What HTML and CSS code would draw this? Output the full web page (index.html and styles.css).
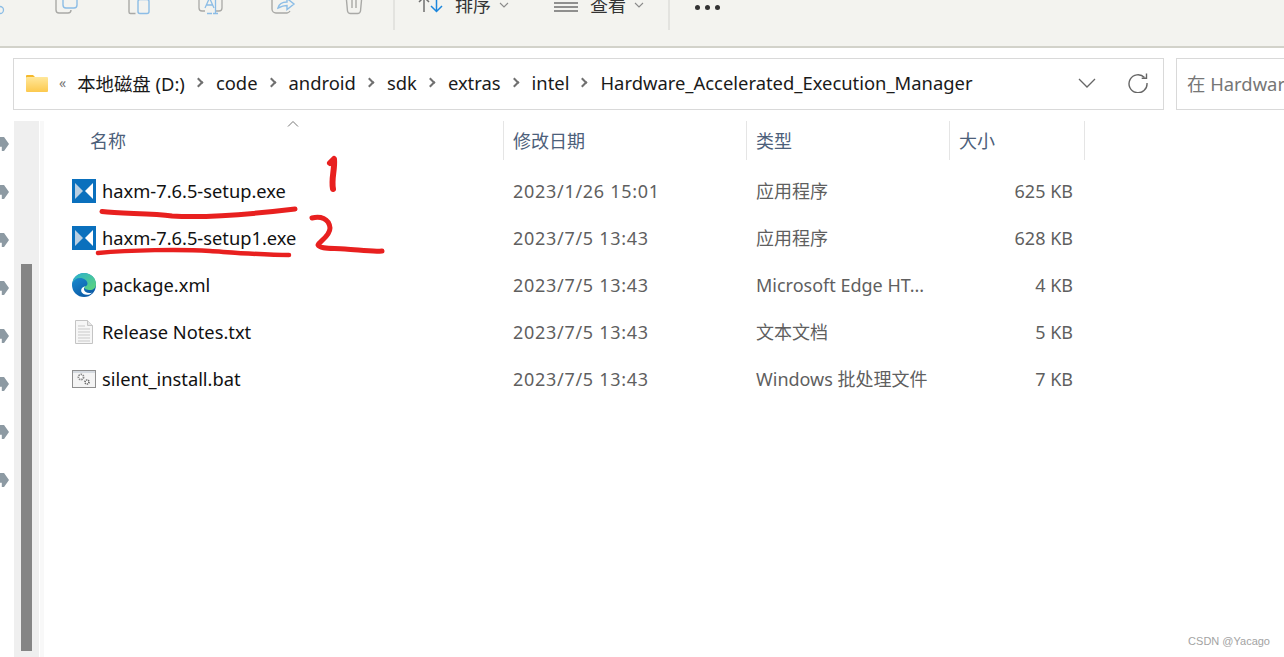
FILE: index.html
```html
<!DOCTYPE html>
<html lang="zh-CN">
<head>
    <meta charset="UTF-8">
    <meta name="viewport" content="width=device-width, initial-scale=1.0">
    <title>Hardware_Accelerated_Execution_Manager</title>
    <link rel="stylesheet" href="styles.css">
</head>
<body>
    <!-- Toolbar, cut off at the top of the shot -->
    <div class="toolbar">
        <svg class="tool tool-cut" width="5" height="20" viewBox="0 0 5 20"><circle cx="0" cy="13" r="3.5" fill="none" stroke="#8cbde6" stroke-width="1.3"/></svg>
        <svg class="tool tool-copy" width="24" height="20" viewBox="0 0 24 20" fill="none" stroke-width="1.4"><path d="M5 -3h-1a3 3 0 0 0 -3 3v13a3 3 0 0 0 3 3h9a3 3 0 0 0 3 -3" stroke="#a9a9a6"/><path d="M8 -3v11a3 3 0 0 0 3 3h8a3 3 0 0 0 3 -3v-11" stroke="#8cbde6"/></svg>
        <svg class="tool tool-paste" width="24" height="20" viewBox="0 0 24 20" fill="none" stroke-width="1.4"><path d="M2 -2v17a1.500 1.500 0 0 0 1.500 1.500h5" stroke="#a9a9a6"/><rect x="11" y="2.500" width="11" height="14" rx="2" stroke="#8cbde6"/></svg>
        <svg class="tool tool-rename" width="25" height="20" viewBox="0 0 25 20" fill="none" stroke-width="1.3"><path d="M1 -2v13a3 3 0 0 0 3 3h3M18 14h3a3 3 0 0 0 3 -3v-13" stroke="#a9a9a6"/><path d="M7 11l4.500 -10l4.500 10M8.500 8h6M15 16.500h5M17.500 -2v18.500M9 16.500h5" stroke="#8cbde6"/></svg>
        <svg class="tool tool-share" width="24" height="20" viewBox="0 0 24 20" fill="none" stroke-width="1.4"><path d="M1 -2v14a4 4 0 0 0 4 4h11a4 4 0 0 0 3 -2" stroke="#a9a9a6"/><path d="M7 11c1 -4 5 -6 9 -6v-3.500l7 5.500l-7 5.500v-4c-3 0 -6 1 -9 2.500z" stroke="#8cbde6"/></svg>
        <svg class="tool tool-delete" width="20" height="20" viewBox="0 0 20 20" fill="none" stroke="#a9a9a6" stroke-width="1.4"><path d="M2 -2l1.500 16a3 3 0 0 0 3 2.500h7a3 3 0 0 0 3 -2.500l1.500 -16M8 3v8M12 3v8"/></svg>
        <span class="tool-sep sep-one"></span>
        <svg class="tool tool-sort" width="25" height="20" viewBox="0 0 25 20" fill="none" stroke-width="1.5"><path d="M1 5l5 -5l5 5M6 0v15" stroke="#707070"/><path d="M13 9l5.500 5.500l5.500 -5.500M18.500 -3v17" stroke="#1c86dc"/></svg>
        <span class="tool-label label-sort">排序</span>
        <svg class="chev chev-sort" width="10" height="6" viewBox="0 0 10 6"><path d="M1 1l4 4l4 -4" fill="none" stroke="#8a8a8a" stroke-width="1.100"/></svg>
        <svg class="tool tool-view" width="24" height="10" viewBox="0 0 24 10" stroke="#6f6f6f" stroke-width="1.300"><path d="M0 1h24M0 5h24M0 9h24"/></svg>
        <span class="tool-label label-view">查看</span>
        <svg class="chev chev-view" width="10" height="6" viewBox="0 0 10 6"><path d="M1 1l4 4l4 -4" fill="none" stroke="#8a8a8a" stroke-width="1.100"/></svg>
        <span class="tool-sep sep-two"></span>
        <div class="dots"><i></i><i></i><i></i></div>
    </div>

    <!-- Address and search -->
    <div class="addr-row">
        <div class="addr">
            <svg class="addr-folder" width="24" height="18" viewBox="0 0 24 18">
                <defs><linearGradient id="folderFill" x1="0" y1="0" x2="0" y2="1"><stop offset="0" stop-color="#ffe79a"/><stop offset="1" stop-color="#fcc94e"/></linearGradient></defs>
                <path d="M1 2a1 1 0 0 1 1 -1h6l3 3h-10z" fill="#f5b92c"/>
                <rect x="1" y="3" width="22" height="15" rx="1" fill="url(#folderFill)"/>
            </svg>
            <span class="crumb-back">«</span>
            <span class="crumb">本地磁盘 (D:)</span><span class="arrow"></span>
            <span class="crumb">code</span><span class="arrow"></span>
            <span class="crumb">android</span><span class="arrow"></span>
            <span class="crumb">sdk</span><span class="arrow"></span>
            <span class="crumb">extras</span><span class="arrow"></span>
            <span class="crumb">intel</span><span class="arrow"></span>
            <span class="crumb">Hardware_Accelerated_Execution_Manager</span>
            <svg class="addr-drop" width="18" height="10" viewBox="0 0 18 10"><path d="M1 1l8 8l8 -8" fill="none" stroke="#666" stroke-width="1.300"/></svg>
            <svg class="addr-refresh" width="20" height="20" viewBox="0 0 20 20" fill="none" stroke="#666" stroke-width="1.400"><path d="M16.500 4.500a9 9 0 1 0 2.500 5.500"/><path d="M18.500 0.500v4.800h-4.800"/></svg>
        </div>
        <div class="search">在 Hardware_Accelerated_Execution_Manager 中搜索</div>
    </div>

    <div class="content">
        <!-- Nav pane edge: pins and scrollbar -->
        <div class="nav">
            <div class="pins">
                <i class="pin"></i><i class="pin"></i><i class="pin"></i><i class="pin"></i>
                <i class="pin"></i><i class="pin"></i><i class="pin"></i><i class="pin"></i>
            </div>
            <div class="track"><div class="thumb"></div></div>
            <div class="nav-edge"></div>
        </div>

        <!-- File list -->
        <div class="list">
            <div class="row head">
                <div class="cell name-head">名称<svg class="sort-up" width="12" height="6" viewBox="0 0 12 6"><path d="M1 5.500l5 -5l5 5" fill="none" stroke="#777" stroke-width="1"/></svg></div>
                <div class="cell">修改日期</div>
                <div class="cell">类型</div>
                <div class="cell">大小</div>
            </div>

            <div class="row file">
                <div class="cell name">
                    <svg class="ico" width="24" height="24" viewBox="0 0 24 24"><rect width="24" height="24" fill="#0a70bd"/><path d="M3 4l8 8l-8 8z" fill="#b9cfe2"/><path d="M21 4l-8 8l8 8z" fill="#fff"/></svg>
                    haxm-7.6.5-setup.exe
                </div>
                <div class="cell date">2023/1/26 15:01</div>
                <div class="cell kind">应用程序</div>
                <div class="cell size">625 KB</div>
            </div>
            <div class="row file">
                <div class="cell name">
                    <svg class="ico" width="24" height="24" viewBox="0 0 24 24"><rect width="24" height="24" fill="#0a70bd"/><path d="M3 4l8 8l-8 8z" fill="#b9cfe2"/><path d="M21 4l-8 8l8 8z" fill="#fff"/></svg>
                    haxm-7.6.5-setup1.exe
                </div>
                <div class="cell date">2023/7/5 13:43</div>
                <div class="cell kind">应用程序</div>
                <div class="cell size">628 KB</div>
            </div>
            <div class="row file">
                <div class="cell name">
                    <svg class="ico" width="24" height="24" viewBox="0 0 24 24">
                        <defs>
                            <linearGradient id="edgeBlue" x1="0" y1="0" x2="0.600" y2="1"><stop offset="0" stop-color="#1c93d6"/><stop offset="1" stop-color="#0b5aa6"/></linearGradient>
                            <linearGradient id="edgeGreen" x1="0" y1="0" x2="1" y2="1"><stop offset="0" stop-color="#2ab0d0"/><stop offset="1" stop-color="#5fd678"/></linearGradient>
                        </defs>
                        <circle cx="12" cy="12" r="12" fill="url(#edgeBlue)"/>
                        <path d="M0.500 10c1 -6 6 -10 11.500 -10c7 0 12 5 12 11c0 4 -3 6 -6 6c-3 0 -6 -1 -6 -3.500c2 0 3.500 -1 3.500 -3c0 -3 -3.500 -5.500 -7.500 -5.500c-3.500 0 -6.500 2 -7.500 5z" fill="url(#edgeGreen)"/>
                        <path d="M13 13.500c-3 0.500 -4.500 3 -3.500 5.500c1 2 4 3.500 8 2.500l3 -2c-4 1.500 -8 0 -8.500 -3c-0.200 -1.200 0.200 -2 1 -3z" fill="#fff"/>
                    </svg>
                    package.xml
                </div>
                <div class="cell date">2023/7/5 13:43</div>
                <div class="cell">Microsoft Edge HT...</div>
                <div class="cell size">4 KB</div>
            </div>
            <div class="row file">
                <div class="cell name">
                    <svg class="ico" width="24" height="24" viewBox="0 0 24 24"><path d="M3.500 0.500h12l5 5v18h-17z" fill="#f6f6f6" stroke="#c4c4c4"/><path d="M15.500 0.500v5h5" fill="#e6e6e6" stroke="#c4c4c4"/><path d="M6 6h7M6 9h12M6 12h12M6 15h12M6 18h12M6 21h12" stroke="#c9c9c9"/></svg>
                    Release Notes.txt
                </div>
                <div class="cell date">2023/7/5 13:43</div>
                <div class="cell kind">文本文档</div>
                <div class="cell size">5 KB</div>
            </div>
            <div class="row file">
                <div class="cell name">
                    <svg class="ico" width="24" height="24" viewBox="0 0 24 24"><rect x="0.500" y="3.500" width="23" height="17" fill="#f4f4f4" stroke="#8f8f8f"/><rect x="1" y="4" width="22" height="2" fill="#d5dae0"/><circle cx="9" cy="10" r="2.600" fill="#fff" stroke="#8a8a8a" stroke-width="1.800" stroke-dasharray="1.500 0.800"/><circle cx="15" cy="15" r="2" fill="#fff" stroke="#6d6d6d" stroke-width="1.700" stroke-dasharray="1.200 0.700"/></svg>
                    silent_install.bat
                </div>
                <div class="cell date">2023/7/5 13:43</div>
                <div class="cell kind">Windows 批处理文件</div>
                <div class="cell size">7 KB</div>
            </div>
        </div>
    </div>

    <!-- Hand drawn marks on top of the shot -->
    <svg class="marks" width="1284" height="657" viewBox="0 0 1284 657" fill="none" stroke="#e8201f" stroke-linecap="round" stroke-linejoin="round">
        <path stroke-width="5" d="M102 211.500C120 214 150 213 172 216C205 218 245 215 295 209"/>
        <path stroke-width="4.500" d="M98 253C130 250 180 249 210 251C240 253 265 255 289 255"/>
        <path stroke-width="6" d="M330 163L334 159C335 170 331 178 333 189"/>
        <path stroke-width="5" d="M312 218C320 216 329 218 330 228C330 236 320 241 318 245C320 249 330 248 345 249C360 250 372 252 382 251"/>
    </svg>

    <div class="mark-text">CSDN @Yacago</div>
</body>
</html>
```

FILE: styles.css
```css
* {
    margin: 0;
    padding: 0;
    box-sizing: border-box;
}

body {
    width: 1284px;
    height: 657px;
    overflow: hidden;
    position: relative;
    background: #ffffff;
    color: #1a1a1a;
    font-family: "Noto Sans", "Noto Sans CJK SC", sans-serif;
    font-size: 18.4px;
}

/* Toolbar */
.toolbar {
    display: flex;
    align-items: flex-end;
    height: 48px;
    padding-bottom: 29px;
    background: #f3f3ef;
    border-bottom: 2px solid #d2d2ca;
    overflow: hidden;
}

.tool {
    flex: none;
    overflow: visible;
}

.tool-copy { margin-left: 50px; }
.tool-paste { margin-left: 48px; }
.tool-rename { margin-left: 47px; }
.tool-share { margin-left: 48px; }
.tool-delete { margin-left: 49px; }
.tool-sort { margin-left: 23px; }
.tool-view { margin-left: 45px; margin-bottom: 5px; }

.tool-sep {
    flex: none;
    width: 2px;
    height: 30px;
    background: #e3e3df;
    margin-bottom: -13px;
}

.sep-one { margin-left: 29px; }
.sep-two { margin-left: 24px; }

.tool-label {
    line-height: 24px;
    font-size: 18px;
    color: #333;
}

.label-sort { margin-left: 12px; }
.label-view { margin-left: 12px; }

.chev {
    flex: none;
    margin-left: 8px;
    margin-bottom: 9px;
}

.dots {
    display: flex;
    gap: 5px;
    margin-left: 25px;
    margin-bottom: 7px;
}

.dots i {
    width: 5px;
    height: 5px;
    border-radius: 50%;
    background: #333;
}

/* Address row */
.addr-row {
    display: flex;
    gap: 12px;
    height: 52px;
    margin: 10px 0 0 13px;
}

.addr {
    flex: none;
    width: 1151px;
    display: flex;
    align-items: center;
    border: 1px solid #d9d9d9;
    padding-left: 11px;
    padding-bottom: 3px;
    white-space: nowrap;
    color: #1a1a1a;
}

.addr-folder { flex: none; margin-right: 10px; }

.crumb-back {
    color: #777;
    font-size: 14px;
    margin-right: 11px;
}

.arrow {
    flex: none;
    width: 7px;
    height: 7px;
    margin: 0 14px 0 10px;
    border-top: 2px solid #707070;
    border-right: 2px solid #707070;
    transform: rotate(45deg);
}

.addr-drop { flex: none; margin-left: auto; }
.addr-refresh { flex: none; margin: 0 15px 0 32px; }

.search {
    flex: none;
    width: 400px;
    display: flex;
    align-items: center;
    border: 1px solid #d9d9d9;
    padding-left: 10px;
    padding-bottom: 3px;
    color: #767676;
    white-space: nowrap;
}

/* Nav pane edge + list */
.content {
    display: flex;
    margin-top: 11px;
    height: 536px;
}

.nav {
    flex: none;
    display: flex;
    width: 44px;
}

.pins {
    flex: none;
    width: 14px;
    display: flex;
    flex-direction: column;
    gap: 34px;
    padding-top: 16px;
}

.pin {
    display: block;
    width: 9px;
    height: 14px;
    background: #8d9aa3;
    clip-path: polygon(0 0, 45% 0, 100% 50%, 45% 100%, 20% 100%, 20% 70%, 0 70%);
}

.track {
    flex: none;
    width: 25px;
    background: #efefef;
    padding: 143px 7px 6px;
}

.thumb {
    height: 100%;
    background: #858585;
}

.nav-edge {
    flex: none;
    width: 4px;
    margin-left: 1px;
    background: #f8f8f8;
}

.list {
    flex: 1;
}

.row {
    display: grid;
    grid-template-columns: 460px 243px 203px 135px;
}

.head {
    height: 39px;
    margin-bottom: 7px;
    color: #4c607a;
    font-size: 18px;
}

.head .cell {
    display: flex;
    align-items: center;
    padding-left: 9px;
    padding-bottom: 2px;
    border-right: 1px solid #e5e5e5;
}

.name-head {
    position: relative;
    padding-left: 46px !important;
}

.sort-up {
    position: absolute;
    left: 243px;
    top: 0;
}

.file {
    height: 47px;
    align-items: center;
    color: #5f5f5f;
    font-size: 18px;
}

.file .cell {
    padding-left: 9px;
    white-space: nowrap;
    overflow: hidden;
}

.file .name {
    display: flex;
    align-items: center;
    gap: 6px;
    padding-left: 28px;
    font-size: 18.3px;
    color: #111;
}

.file .date {
    letter-spacing: 0.7px;
}

.file .kind {
    padding-bottom: 2px;
}

.ico { flex: none; }

.file .size {
    text-align: right;
    padding-right: 12px;
}

/* Red pen marks and watermark */
.marks {
    position: absolute;
    left: 0;
    top: 0;
    pointer-events: none;
}

.mark-text {
    position: absolute;
    right: 14px;
    top: 635px;
    font-family: "Liberation Sans", sans-serif;
    font-size: 11px;
    color: #a3a3a3;
}
```
